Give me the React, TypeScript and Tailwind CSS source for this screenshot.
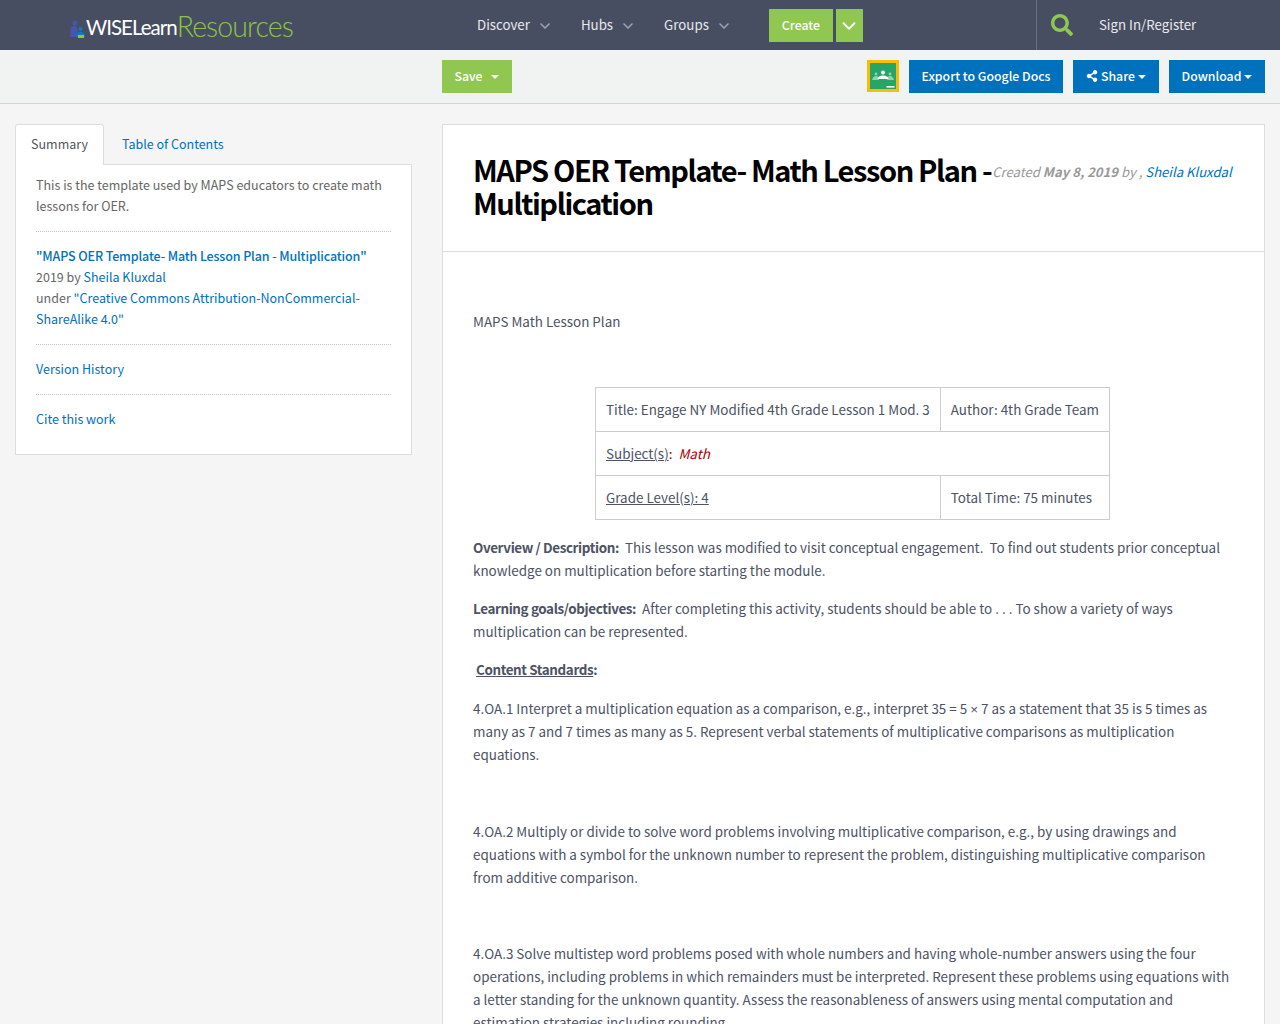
import { ChevronDown } from 'lucide-react'
import { FaSearch, FaShareAlt } from 'react-icons/fa'

function NavItem({ label }: { label: string }) {
  return (
    <div className="flex items-center gap-[7px] mr-[28px] text-[13.3px] text-[#e8e9ed]">
      <span>{label}</span>
      <ChevronDown size={16} strokeWidth={2.5} className="text-[#9b9fb3] mt-[1px]" />
    </div>
  )
}

function Caret() {
  return <span className="inline-block w-0 h-0 border-x-[4px] border-x-transparent border-t-[4px] border-t-white mt-[1px]" />
}

function Logo() {
  return (
    <div className="flex items-end w-[477px] pl-[69px] h-[50px] pb-[11px]">
      <svg width="17" height="18" viewBox="0 0 17 18" className="mb-[1px]">
        <circle cx="6" cy="3" r="2.6" fill="#4a55a8" />
        <path d="M1 17 L1.5 9 Q2 6 5 6 Q8 6 8.5 10 L9 17 Z" fill="#4a55a8" />
        <circle cx="11.5" cy="9" r="2" fill="#0a7bc4" />
        <path d="M7 17 Q7 12 11.5 12 Q16 12 16 17 Z" fill="#0a7bc4" />
        <rect x="9" y="15" width="6" height="3" fill="#8dc63f" />
      </svg>
      <span className="font-['Lato',sans-serif] text-white text-[20.5px] leading-[24px] tracking-[-1px]">WISELearn</span>
      <span className="font-['Lato',sans-serif] font-light text-[#8bc34a] text-[28.5px] leading-[28px] tracking-[-0.9px] mb-[-1px]">Resources</span>
    </div>
  )
}

function Header() {
  return (
    <header className="h-[50px] bg-[#484e61] flex items-center">
      <Logo />
      <nav className="flex items-center">
        <NavItem label="Discover" />
        <NavItem label="Hubs" />
        <NavItem label="Groups" />
      </nav>
      <div className="flex items-center ml-[9px]">
        <div className="w-[64px] h-[33px] bg-[#8fc750] text-white text-[12.3px] font-medium flex items-center justify-center">Create</div>
        <div className="w-[27px] h-[33px] bg-[#8fc750] ml-[3px] flex items-center justify-center">
          <ChevronDown size={22} strokeWidth={2} className="text-white mt-[2px]" />
        </div>
      </div>
      <div className="ml-[173px] h-[50px] border-l border-[#6a6f80] flex items-center pl-[14px]">
        <FaSearch size={22} className="text-[#8fc750]" />
        <span className="ml-[26px] text-[13.3px] text-[#e8e9ed]">Sign In/Register</span>
      </div>
    </header>
  )
}

function Toolbar() {
  return (
    <div className="h-[54px] bg-[#f1f3f2] border-b border-[#d4d4d4] flex items-center pb-[1px] pl-[442px] pr-[15px]">
      <div className="w-[70px] h-[33px] bg-[#8fc750] text-white text-[12.3px] font-medium flex items-center justify-center gap-[8px] pr-[1px]">
        Save <Caret />
      </div>
      <div className="ml-auto flex items-center gap-[10px]">
        <div className="w-[32px] h-[32px] border-[3px] border-[#fbbc05] bg-[#25a667] flex justify-center">
          <svg width="26" height="26" viewBox="0 0 26 26">
            <circle cx="6" cy="11" r="1.4" fill="#8fd3b0" />
            <circle cx="20" cy="11" r="1.4" fill="#8fd3b0" />
            <path d="M2 17 Q3 13 6 13 Q9 13 9 17 Z" fill="#8fd3b0" />
            <path d="M17 17 Q17 13 20 13 Q23 13 24 17 Z" fill="#8fd3b0" />
            <circle cx="13" cy="9.5" r="2" fill="#fff" />
            <path d="M7.5 16 Q8 12.5 13 12.5 Q18 12.5 18.5 16 Z" fill="#fff" />
            <rect x="16.5" y="23" width="8" height="1.6" fill="#fff" />
          </svg>
        </div>
        <div className="w-[154px] h-[33px] bg-[#0071bc] text-white text-[12.3px] font-medium flex items-center justify-center">Export to Google Docs</div>
        <div className="w-[86px] h-[33px] bg-[#0071bc] text-white text-[12.3px] font-medium flex items-center justify-center gap-[3px]">
          <FaShareAlt size={12} /> Share <Caret />
        </div>
        <div className="w-[96px] h-[33px] bg-[#0071bc] text-white text-[12.3px] font-medium flex items-center justify-center gap-[3px]">
          Download <Caret />
        </div>
      </div>
    </div>
  )
}

function Sidebar() {
  const link = 'text-[#0071bc]'
  const rule = 'border-t border-dotted border-[#c4c4c4]'
  return (
    <aside className="w-[397px] text-[12.5px] leading-[21px] text-[#666]">
      <div className="flex h-[41px]">
        <div className="w-[89px] h-[41px] bg-white border border-b-0 border-[#ddd] rounded-t-[3px] relative z-10 text-[#555] flex items-center justify-center pb-[3px]">Summary</div>
        <div className={`ml-[18px] flex items-center pb-[3px] ${link}`}>Table of Contents</div>
      </div>
      <div className="bg-white border border-[#ddd] mt-[-1px] px-[20px] pt-[9px] pb-[24px] h-[291px]">
        <p>This is the template used by MAPS educators to create math lessons for OER.</p>
        <div className={`${rule} mt-[15px] mb-[13px]`} />
        <p>
          <span className={`${link} font-medium tracking-[-0.13px]`}>"MAPS OER Template- Math Lesson Plan - Multiplication"</span>
          <br />
          2019 by <span className={link}>Sheila Kluxdal</span>
          <br />
          under <span className={link}>"Creative Commons Attribution-NonCommercial-ShareAlike 4.0"</span>
        </p>
        <div className={`${rule} mt-[15px] mb-[13px]`} />
        <p className={link}>Version History</p>
        <div className={`${rule} mt-[15px] mb-[13px]`} />
        <p className={link}>Cite this work</p>
      </div>
    </aside>
  )
}

function LessonTable() {
  const cell = 'border border-[#ccc] px-[10px] h-[44px]'
  return (
    <table className="border-collapse ml-[122px] mt-[54px] w-[515px]">
      <tbody>
        <tr>
          <td className={`${cell} whitespace-nowrap`}>Title: Engage NY Modified 4th Grade Lesson 1 Mod. 3</td>
          <td className={`${cell} whitespace-nowrap`}>Author: 4th Grade Team</td>
        </tr>
        <tr>
          <td colSpan={2} className={cell}>
            <span className="underline">Subject(s)</span><span className="text-[#a00]">:</span>&nbsp; <em className="text-[#a00]">Math</em>
          </td>
        </tr>
        <tr>
          <td className={cell}><span className="underline">Grade Level(s): 4</span></td>
          <td className={cell}>Total Time: 75 minutes</td>
        </tr>
      </tbody>
    </table>
  )
}

function Article() {
  return (
    <main className="w-[823px] bg-white border border-[#ddd] border-b-0 h-[900px] overflow-hidden">
      <div className="h-[127px] border-b border-[#ddd] px-[30px] pt-[28px]">
        <h1 className="text-[29px] leading-[33px] font-bold text-black tracking-[-1.4px]">
          MAPS OER Template- Math Lesson Plan -
          <span className="text-[13.1px] leading-none align-[5px] font-normal italic text-[#999] tracking-normal ml-[1px]">
            Created <b className="font-bold">May 8, 2019</b> by , <span className="text-[#0071bc]">Sheila Kluxdal</span>
          </span>
          <br />
          Multiplication
        </h1>
      </div>
      <div className="px-[30px] pt-[58px] text-[13.43px] leading-[23px] text-[#4d5264]">
        <p>MAPS Math Lesson Plan</p>
        <LessonTable />
        <p className="mt-[16px]"><b className="font-bold tracking-[-0.38px]">Overview / Description:</b>&nbsp; This lesson was modified to visit conceptual engagement.&nbsp; To find out students prior conceptual knowledge on multiplication before starting the module.</p>
        <p className="mt-[15px]"><b className="font-bold tracking-[-0.38px]">Learning goals/objectives:</b>&nbsp; After completing this activity, students should be able to . . . To show a variety of ways multiplication can be represented.</p>
        <p className="mt-[15px]">&nbsp;<b className="font-bold tracking-[-0.38px]"><span className="underline">Content Standards</span>:</b></p>
        <p className="mt-[16px]">4.OA.1 Interpret a multiplication equation as a comparison, e.g., interpret 35 = 5 <span className="font-['Liberation_Sans'] leading-none">×</span> 7 as a statement that 35 is 5 times as many as 7 and 7 times as many as 5. Represent verbal statements of multiplicative comparisons as multiplication equations.</p>
        <p className="mt-[54px]">4.OA.2 Multiply or divide to solve word problems involving multiplicative comparison, e.g., by using drawings and equations with a symbol for the unknown number to represent the problem, distinguishing multiplicative comparison from additive comparison.</p>
        <p className="mt-[53px]">4.OA.3 Solve multistep word problems posed with whole numbers and having whole-number answers using the four operations, including problems in which remainders must be interpreted. Represent these problems using equations with a letter standing for the unknown quantity. Assess the reasonableness of answers using mental computation and estimation strategies including rounding.</p>
      </div>
    </main>
  )
}

export default function App() {
  return (
    <div className="h-[1024px] overflow-hidden bg-[#f5f5f5] font-['Noto_Sans_CJK_JP','Liberation_Sans',sans-serif]">
      <Header />
      <Toolbar />
      <div className="flex pl-[15px] pt-[20px] gap-[30px]">
        <Sidebar />
        <Article />
      </div>
    </div>
  )
}
